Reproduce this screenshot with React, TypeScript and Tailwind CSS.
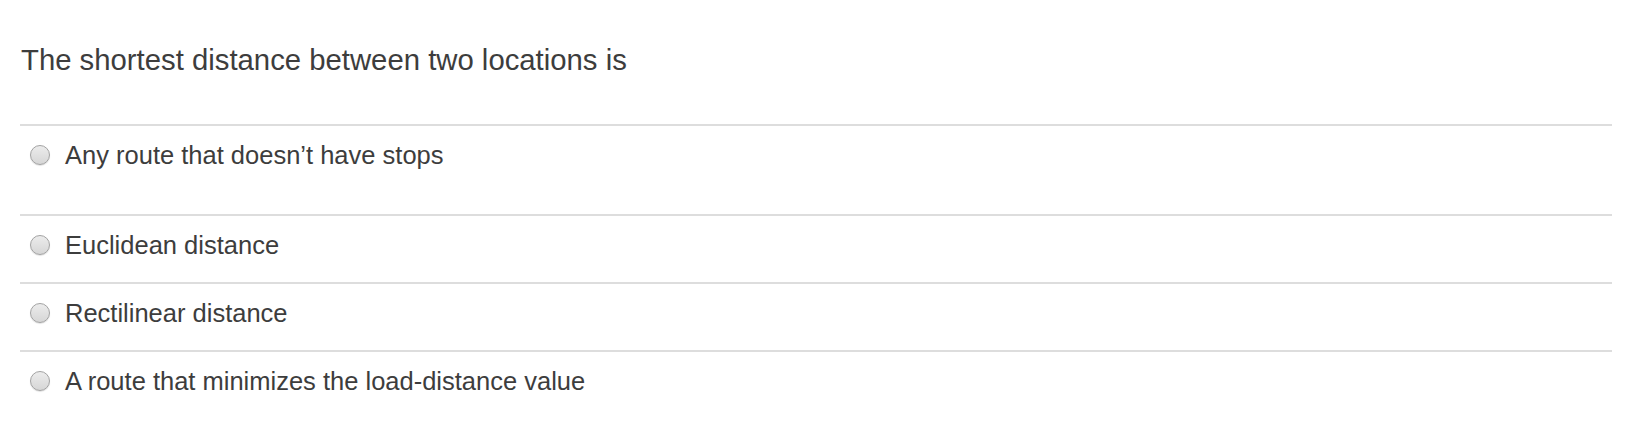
import React from 'react';

const options = [
  'Any route that doesn’t have stops',
  'Euclidean distance',
  'Rectilinear distance',
  'A route that minimizes the load-distance value',
];

function Radio() {
  return (
    <span className="inline-block w-[20px] h-[20px] rounded-full border-[1.5px] border-[#a2a2a2] bg-gradient-to-b from-[#ececec] to-[#d6d6d6] shadow-[0_1px_1px_rgba(0,0,0,0.12)] shrink-0" />
  );
}

export default function App() {
  return (
    <div className="bg-white min-h-screen pl-[20px] pr-[22px] font-['Liberation_Sans',Arial,sans-serif] text-[#3d3d3d]">
      {/* Question */}
      <div className="pt-[42px] pb-[46px] text-[29.3px] leading-[36px] pl-px">
        The shortest distance between two locations is
      </div>

      {/* Answers */}
      <div>
        {options.map((opt, i) => (
          <div
            key={opt}
            className={
              'border-t-2 border-[#dddddd] pt-[14px] flex items-center ' +
              (i === 0 ? 'pb-[44px]' : 'pb-[22px]')
            }
          >
            <label className="flex items-center gap-[15px] pl-[10px] text-[25.5px] leading-[30px]">
              <Radio />
              <span>{opt}</span>
            </label>
          </div>
        ))}
      </div>
    </div>
  );
}
